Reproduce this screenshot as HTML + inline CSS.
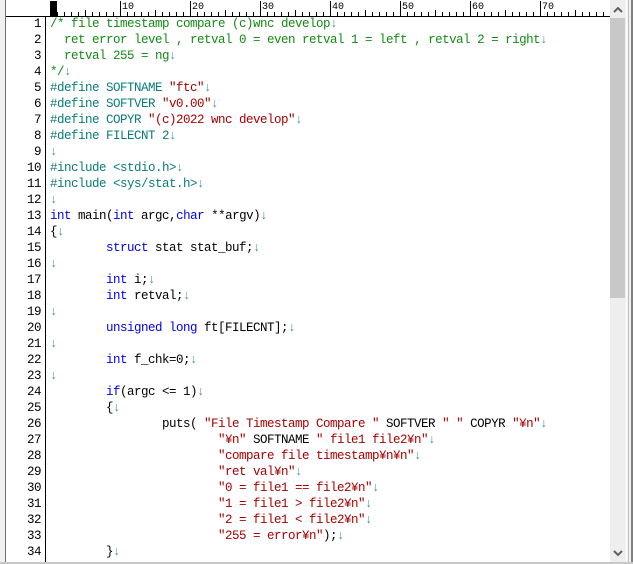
<!DOCTYPE html><html><head><meta charset="utf-8"><style>
html,body{margin:0;padding:0;width:633px;height:564px;overflow:hidden;background:#f0f0f0;}
#frame{position:absolute;left:5px;top:0;width:622px;height:563px;background:#fff;border-left:1px solid #707070;box-sizing:border-box;}
#ruler{position:absolute;left:0;top:0;}
#code{position:absolute;left:0;top:16px;width:604px;}
.l{height:16px;line-height:16px;font-family:"Liberation Mono",monospace;font-size:12.5px;letter-spacing:-0.5px;white-space:pre;tab-size:56px;-moz-tab-size:56px;position:relative;}
.n{position:absolute;left:0;width:35px;text-align:right;color:#000;}
.t{position:absolute;left:44px;}
#sep{position:absolute;left:39px;top:16px;width:1px;height:547px;background:#000;}
.c{color:#138a13}.p{color:#0a7b7b}.s{color:#a80000}.k{color:#0000ee}.a{color:#3c8eb0}
#sb{position:absolute;left:610px;top:0;width:16px;height:563px;background:#eeeeee;}
#th{position:absolute;left:610px;top:18px;width:15px;height:280px;background:#c8c8c8;}
#rb{position:absolute;left:628px;top:0;width:1px;height:564px;background:#c0c0c0;}
#rb2{position:absolute;left:631px;top:0;width:2px;height:564px;background:#808080;}
#bb{position:absolute;left:0;top:562px;width:633px;height:2px;background:#c8c8c8;}
</style></head><body>
<div id="frame">
<svg id="ruler" width="604" height="17" xmlns="http://www.w3.org/2000/svg">
<rect x="0" y="0" width="604" height="17" fill="#fff"/>
<line x1="0" y1="16.5" x2="604" y2="16.5" stroke="#000"/>
<g stroke="#000" id="ticks"></g>
<rect x="44" y="1" width="7" height="15" fill="#000"/>
<g font-family="Liberation Mono,monospace" font-size="10" fill="#000" id="labs"></g>
</svg>
<div id="sep"></div>
<div id="code">
<div class="l"><span class="n">1</span><span class="t c">/* file timestamp compare (c)wnc develop<span class="a">↓</span></span></div>
<div class="l"><span class="n">2</span><span class="t c">  ret error level , retval 0 = even retval 1 = left , retval 2 = right<span class="a">↓</span></span></div>
<div class="l"><span class="n">3</span><span class="t c">  retval 255 = ng<span class="a">↓</span></span></div>
<div class="l"><span class="n">4</span><span class="t c">*/<span class="a">↓</span></span></div>
<div class="l"><span class="n">5</span><span class="t"><span class="p">#define SOFTNAME </span><span class="s">"ftc"</span><span class="a">↓</span></span></div>
<div class="l"><span class="n">6</span><span class="t"><span class="p">#define SOFTVER </span><span class="s">"v0.00"</span><span class="a">↓</span></span></div>
<div class="l"><span class="n">7</span><span class="t"><span class="p">#define COPYR </span><span class="s">"(c)2022 wnc develop"</span><span class="a">↓</span></span></div>
<div class="l"><span class="n">8</span><span class="t"><span class="p">#define FILECNT 2</span><span class="a">↓</span></span></div>
<div class="l"><span class="n">9</span><span class="t"><span class="a">↓</span></span></div>
<div class="l"><span class="n">10</span><span class="t"><span class="p">#include &lt;stdio.h&gt;</span><span class="a">↓</span></span></div>
<div class="l"><span class="n">11</span><span class="t"><span class="p">#include &lt;sys/stat.h&gt;</span><span class="a">↓</span></span></div>
<div class="l"><span class="n">12</span><span class="t"><span class="a">↓</span></span></div>
<div class="l"><span class="n">13</span><span class="t"><span class="k">int</span> main(<span class="k">int</span> argc,<span class="k">char</span> **argv)<span class="a">↓</span></span></div>
<div class="l"><span class="n">14</span><span class="t">{<span class="a">↓</span></span></div>
<div class="l"><span class="n">15</span><span class="t">	<span class="k">struct</span> stat stat_buf;<span class="a">↓</span></span></div>
<div class="l"><span class="n">16</span><span class="t"><span class="a">↓</span></span></div>
<div class="l"><span class="n">17</span><span class="t">	<span class="k">int</span> i;<span class="a">↓</span></span></div>
<div class="l"><span class="n">18</span><span class="t">	<span class="k">int</span> retval;<span class="a">↓</span></span></div>
<div class="l"><span class="n">19</span><span class="t"><span class="a">↓</span></span></div>
<div class="l"><span class="n">20</span><span class="t">	<span class="k">unsigned long</span> ft[FILECNT];<span class="a">↓</span></span></div>
<div class="l"><span class="n">21</span><span class="t"><span class="a">↓</span></span></div>
<div class="l"><span class="n">22</span><span class="t">	<span class="k">int</span> f_chk=0;<span class="a">↓</span></span></div>
<div class="l"><span class="n">23</span><span class="t"><span class="a">↓</span></span></div>
<div class="l"><span class="n">24</span><span class="t">	<span class="k">if</span>(argc &lt;= 1)<span class="a">↓</span></span></div>
<div class="l"><span class="n">25</span><span class="t">	{<span class="a">↓</span></span></div>
<div class="l"><span class="n">26</span><span class="t">		puts( <span class="s">"File Timestamp Compare "</span> SOFTVER <span class="s">" "</span> COPYR <span class="s">"¥n"</span><span class="a">↓</span></span></div>
<div class="l"><span class="n">27</span><span class="t">			<span class="s">"¥n"</span> SOFTNAME <span class="s">" file1 file2¥n"</span><span class="a">↓</span></span></div>
<div class="l"><span class="n">28</span><span class="t">			<span class="s">"compare file timestamp¥n¥n"</span><span class="a">↓</span></span></div>
<div class="l"><span class="n">29</span><span class="t">			<span class="s">"ret val¥n"</span><span class="a">↓</span></span></div>
<div class="l"><span class="n">30</span><span class="t">			<span class="s">"0 = file1 == file2¥n"</span><span class="a">↓</span></span></div>
<div class="l"><span class="n">31</span><span class="t">			<span class="s">"1 = file1 &gt; file2¥n"</span><span class="a">↓</span></span></div>
<div class="l"><span class="n">32</span><span class="t">			<span class="s">"2 = file1 &lt; file2¥n"</span><span class="a">↓</span></span></div>
<div class="l"><span class="n">33</span><span class="t">			<span class="s">"255 = error¥n"</span>);<span class="a">↓</span></span></div>
<div class="l"><span class="n">34</span><span class="t">	}<span class="a">↓</span></span></div>
</div>
</div>
<div id="sb"></div><div id="th"></div>
<svg style="position:absolute;left:610px;top:4px" width="16" height="12"><path d="M4 8 L8 4 L12 8" stroke="#606060" stroke-width="2" fill="none"/></svg>
<svg style="position:absolute;left:610px;top:548px" width="16" height="12"><path d="M4 3 L8 7 L12 3" stroke="#606060" stroke-width="2" fill="none"/></svg>
<div id="rb"></div><div id="rb2"></div><div id="bb"></div>
<script>
var t=document.getElementById('ticks'),lb=document.getElementById('labs'),h='',L='';
for(var i=0;i<80;i++){var x=44+7*i+0.5;if(x>604)break;var y=i%10==0?1:(i%5==0?10:12);h+='<line x1="'+x+'" y1="'+y+'" x2="'+x+'" y2="16"/>';if(i%10==0&&i>0)L+='<text x="'+(x+1.5)+'" y="9">'+i+'</text>';}
t.innerHTML=h;lb.innerHTML=L;
</script>
</body></html>
